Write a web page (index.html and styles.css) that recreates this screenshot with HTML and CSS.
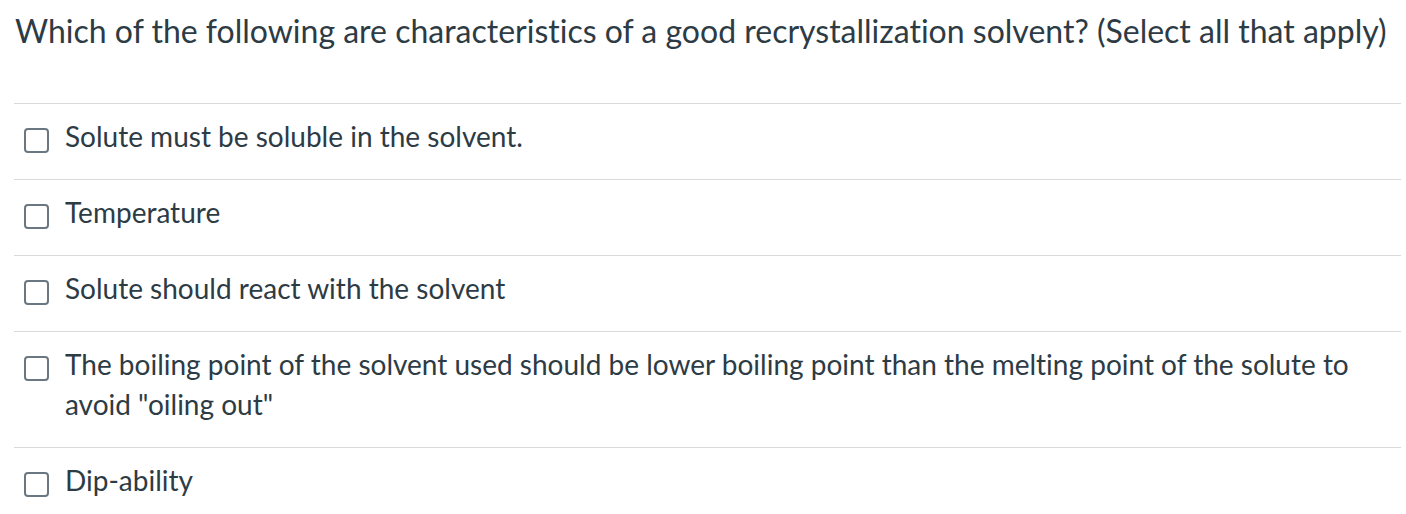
FILE: index.html
```html
<!DOCTYPE html>
<html>
<head>
<meta charset="utf-8">
<link rel="stylesheet" href="styles.css">
</head>
<body>
<div class="quiz">
  <div class="question">Which of the following are characteristics of a good recrystallization solvent? (Select all that apply)</div>
  <div class="answers">
    <label class="answer"><span class="box"></span><span class="text">Solute must be soluble in the solvent.</span></label>
    <label class="answer"><span class="box"></span><span class="text">Temperature</span></label>
    <label class="answer"><span class="box"></span><span class="text">Solute should react with the solvent</span></label>
    <label class="answer"><span class="box"></span><span class="text">The boiling point of the solvent used should be lower boiling point than the melting point of the solute to avoid "oiling out"</span></label>
    <label class="answer"><span class="box"></span><span class="text">Dip-ability</span></label>
  </div>
</div>
</body>
</html>
```
FILE: styles.css
```css
html, body {
  margin: 0;
  padding: 0;
  background: #ffffff;
}
body {
  font-family: Lato, "Liberation Sans", sans-serif;
  color: #2d3b45;
  font-variant-ligatures: none;
}
.quiz {
  padding: 0 5px 0 14px;
}
.question {
  font-size: 32px;
  line-height: 40px;
  padding: 11px 0 0 1px;
  height: 103px;
  box-sizing: border-box;
}
.answers {
  display: flex;
  flex-direction: column;
}
.answer {
  display: flex;
  align-items: flex-start;
  gap: 16px;
  border-top: 1px solid #d7dadd;
  padding: 12px 0 23px 10px;
  font-size: 28px;
  line-height: 40px;
}
.box {
  flex: none;
  width: 21px;
  height: 21px;
  border: 2px solid #6b7780;
  border-radius: 4px;
  margin-top: 12px;
}
.text {
  flex: 1;
}
```
